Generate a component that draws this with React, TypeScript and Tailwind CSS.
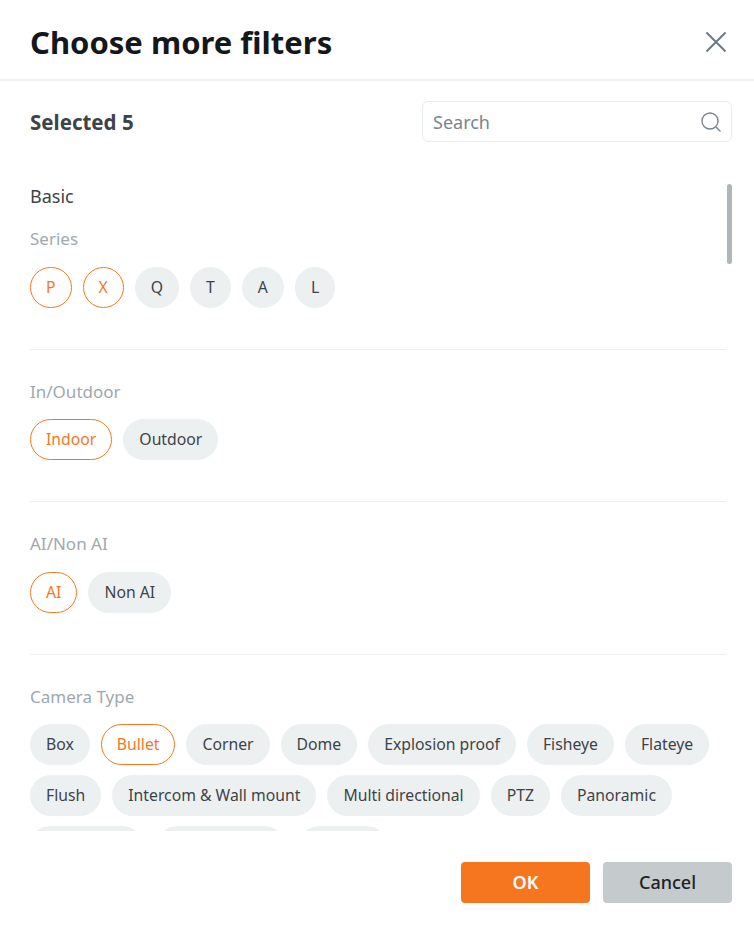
const font = "font-['Noto_Sans',sans-serif]"

function Pill({ label, active }: { label: string; active?: boolean }) {
  return (
    <button
      className={
        "h-[41px] rounded-[21px] border px-[15px] text-[15.75px] font-[450] whitespace-nowrap text-center " +
        (active ? "border-[#f6761f] bg-white text-[#f6761f]" : "border-[#edf0f1] bg-[#edf0f1] text-[#3d4347]")
      }
    >
      {label}
    </button>
  )
}

function Section({ title, children }: { title: string; children: React.ReactNode }) {
  return (
    <div>
      <div className="text-[17px] leading-[24px] text-[#a0a8ad]">{title}</div>
      <div className="mt-[15.5px] flex flex-wrap gap-x-[11px] gap-y-[10px]">{children}</div>
    </div>
  )
}

export default function App() {
  return (
    <div className={font + " flex h-[936px] w-[754px] flex-col overflow-hidden bg-white"}>
      <div className="flex h-[81px] shrink-0 items-center justify-between border-b-2 border-[#edf0f1] pt-[5px] pr-[27px] pl-[30px]">
        <h1 className="text-[31px] leading-[40px] font-bold text-[#14181b]">Choose more filters</h1>
        <button>
          <svg width="22" height="22" viewBox="0 0 22 22" fill="none" stroke="#6e7a82" strokeWidth="2">
            <path d="M1.5 1.5 L20.5 20.5 M20.5 1.5 L1.5 20.5" />
          </svg>
        </button>
      </div>

      <div className="mt-[20px] flex h-[41px] shrink-0 items-center justify-between pr-[22px] pl-[30px]">
        <div className="pt-[2px] text-[20.5px] leading-[39px] font-bold text-[#3d4347]">Selected 5</div>
        <div className="flex h-[41px] w-[310px] items-center justify-between rounded-[6px] border border-[#e8edf1] pr-[9px] pl-[10px]">
          <span className="pt-[2px] text-[18px] text-[#7b858c]">Search</span>
          <svg width="22" height="22" viewBox="0 0 22 22" fill="none" stroke="#7b858c" strokeWidth="1.4">
            <circle cx="10" cy="10" r="8" />
            <path d="M16 16 L20.5 20.5" />
          </svg>
        </div>
      </div>

      <div className="relative mt-[41px] h-[648px] shrink-0 overflow-hidden pl-[30px]">
        <div className="absolute top-[1px] right-[22px] h-[80px] w-[5px] rounded-full bg-[#aeb6ba]" />
        <div className="w-[696px]">
          <div className="text-[18px] leading-[27px] text-[#3d4347]">Basic</div>
          <div className="mt-[17.4px]">
            <Section title="Series">
              <Pill label="P" active />
              <Pill label="X" active />
              <Pill label="Q" />
              <Pill label="T" />
              <Pill label="A" />
              <Pill label="L" />
            </Section>
          </div>
          <div className="mt-[41px] mb-[30px] h-px bg-[#edf0f1]" />
          <Section title="In/Outdoor">
            <Pill label="Indoor" active />
            <Pill label="Outdoor" />
          </Section>
          <div className="mt-[41px] mb-[30px] h-px bg-[#edf0f1]" />
          <Section title="AI/Non AI">
            <Pill label="AI" active />
            <Pill label="Non AI" />
          </Section>
          <div className="mt-[41px] mb-[30px] h-px bg-[#edf0f1]" />
          <Section title="Camera Type">
            <Pill label="Box" />
            <Pill label="Bullet" active />
            <Pill label="Corner" />
            <Pill label="Dome" />
            <Pill label="Explosion proof" />
            <Pill label="Fisheye" />
            <Pill label="Flateye" />
            <Pill label="Flush" />
            <Pill label="Intercom & Wall mount" />
            <Pill label="Multi directional" />
            <Pill label="PTZ" />
            <Pill label="Panoramic" />
          </Section>
          <div className="mt-[10px] flex gap-[14px]">
            <div className="h-[41px] w-[113px] rounded-[21px] bg-[#edf0f1]" />
            <div className="h-[41px] w-[128px] rounded-[21px] bg-[#edf0f1]" />
            <div className="h-[41px] w-[88px] rounded-[21px] bg-[#edf0f1]" />
          </div>
        </div>
      </div>

      <div className="mt-[31px] flex shrink-0 justify-end gap-[13px] pr-[22px]">
        <button className="h-[41px] w-[129px] rounded-[4px] bg-[#f6761f] text-[18px] font-semibold text-white">OK</button>
        <button className="h-[41px] w-[129px] rounded-[4px] bg-[#c5cacc] text-[18px] font-medium text-[#1d2225]">Cancel</button>
      </div>
    </div>
  )
}
